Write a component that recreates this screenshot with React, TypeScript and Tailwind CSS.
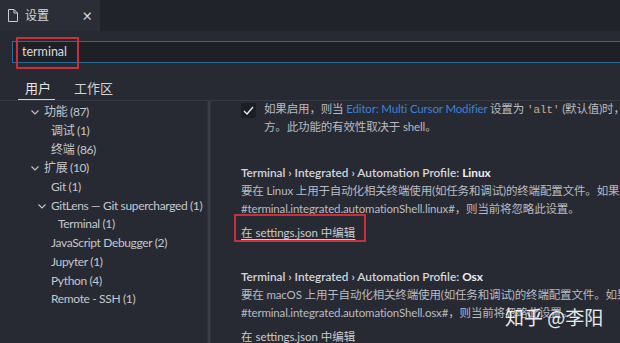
import React from "react";

const treeItems = [
  { label: "功能 (87)", indent: 30, open: true },
  { label: "调试 (1)", indent: 51 },
  { label: "终端 (86)", indent: 51 },
  { label: "扩展 (10)", indent: 30, open: true },
  { label: "Git (1)", indent: 51 },
  { label: "GitLens — Git supercharged (1)", indent: 37, open: true },
  { label: "Terminal (1)", indent: 58 },
  { label: "JavaScript Debugger (2)", indent: 51 },
  { label: "Jupyter (1)", indent: 51 },
  { label: "Python (4)", indent: 51 },
  { label: "Remote - SSH (1)", indent: 51 },
];

function Chevron() {
  return (
    <svg width="10" height="10" viewBox="0 0 10 10" className="mr-[4px] shrink-0">
      <path d="M1.5 3.5 L5 7 L8.5 3.5" stroke="#c5c8ce" strokeWidth="1.1" fill="none" />
    </svg>
  );
}

function Setting({ os, desc, shell }: { os: string; desc: string; shell: string }) {
  return (
    <div className="flex flex-col">
      <div className="text-[11.8px] font-semibold text-[#d4d6da] leading-[19px] whitespace-nowrap">
        Terminal › Integrated › Automation Profile: <span className="font-bold text-[#eceef1]">{os}</span>
      </div>
      <div className="text-[11.5px] tracking-[-0.15px] text-[#b8bbc2] leading-[18px] whitespace-nowrap">
        要在 {desc} 上用于自动化相关终端使用(如任务和调试)的终端配置文件。如果设置了
      </div>
      <div className="text-[11.5px] tracking-[-0.15px] text-[#b8bbc2] leading-[18px] whitespace-nowrap">
        #terminal.integrated.automationShell.{shell}#，则当前将忽略此设置。
      </div>
    </div>
  );
}

export default function App() {
  return (
    <div
      className="w-[620px] h-[343px] overflow-hidden bg-[#272a32] flex flex-col relative"
      style={{ fontFamily: 'Lato, "Noto Sans CJK SC", sans-serif' }}
    >
      {/* tab bar */}
      <div className="h-[31px] bg-[#202329] flex shrink-0">
        <div className="w-[100px] bg-[#2b2e36] flex items-center pl-[8px] pr-[8px] text-[#d7d9dd]">
          <svg width="10" height="13" viewBox="0 0 10 13" className="mr-[7px]">
            <path d="M0.5 0.5 H6 L9.5 4 V12.5 H0.5 Z M6 0.5 V4 H9.5" stroke="#c9ccd1" strokeWidth="1" fill="none" />
          </svg>
          <span className="text-[12px]">设置</span>
          <span className="ml-auto text-[17px] leading-none text-[#d7d9dd]">×</span>
        </div>
      </div>

      {/* search */}
      <div className="pt-[10px] pl-[12px] shrink-0">
        <div className="h-[22px] bg-[#1e2026] border-y border-l border-[#2c6b96] flex items-center pl-[9px] relative">
          <span className="text-[12.5px] text-[#d9dbdf]">terminal</span>
          <div className="absolute left-[3px] top-[-5px] w-[63px] h-[32px] border-2 border-[#c8303c]" />
        </div>
      </div>

      {/* scope tabs */}
      <div className="flex pl-[18px] mt-[13px] h-[24px] items-end gap-[14px] text-[13px] shrink-0">
        <div className="flex flex-col text-[#e4e6ea]">
          <span className="leading-[20px] px-[7px]">用户</span>
          <div className="h-[1px] bg-[#d0d3d8] w-[37px] mt-[1px]" />
        </div>
        <span className="text-[#d0d3d8] leading-[20px] mb-[2px] ml-[2px]">工作区</span>
      </div>
      <div className="h-[1px] bg-[#353943] shrink-0" />

      {/* body */}
      <div className="flex flex-1 min-h-0">
        <div className="w-[207px] shrink-0 pt-[2px] text-[12px] tracking-[-0.35px] text-[#c4c7cd]">
          {treeItems.map((it) => (
            <div
              key={it.label}
              className="h-[18.7px] flex items-center whitespace-nowrap"
              style={{ paddingLeft: it.indent }}
            >
              {it.open && <Chevron />}
              {it.label}
            </div>
          ))}
        </div>
        <div className="w-[4px] bg-[#3a3e47] border-x border-[#30333b] shrink-0" />
        <div className="flex-1 pl-[30px] flex flex-col">
          <div className="flex -mt-[1px]">
            <div className="w-[15px] h-[15px] bg-[#1c1e24] rounded-[2px] flex items-center justify-center mt-[3px] shrink-0">
              <svg width="11" height="9" viewBox="0 0 11 9">
                <path d="M1 5 L4 8 L10 1" stroke="#e6e8eb" strokeWidth="1.4" fill="none" />
              </svg>
            </div>
            <div className="ml-[8px] text-[11.5px] tracking-[-0.15px] text-[#b8bbc2] leading-[17px] whitespace-nowrap">
              <div>
                如果启用，则当 <span className="text-[#3b82d9]">Editor: Multi Cursor Modifier</span> 设置为{" "}
                <span className="text-[#d6a77a] tracking-[-0.4px]" style={{ fontFamily: '"Liberation Mono", monospace' }}>
                  'alt'
                </span>{" "}
                (默认值)时，
              </div>
              <div>方。此功能的有效性取决于 shell。</div>
            </div>
          </div>

          <div className="mt-[28px]">
            <Setting os="Linux" desc="Linux" shell="linux" />
          </div>
          <div className="mt-[1px] relative">
            <span className="text-[11.5px] text-[#c9ccd1] underline underline-offset-2 leading-[18px]">
              在 settings.json 中编辑
            </span>
            <div className="absolute left-[-7px] top-[-5px] w-[132px] h-[28px] border-2 border-[#c8303c]" />
          </div>

          <div className="mt-[24px]">
            <Setting os="Osx" desc="macOS" shell="osx" />
          </div>
          <div className="mt-[1px]">
            <span className="text-[11.5px] text-[#c9ccd1] underline underline-offset-2 leading-[18px]">
              在 settings.json 中编辑
            </span>
          </div>
        </div>
      </div>

      {/* watermark */}
      <div
        className="absolute left-[505px] top-[304px] text-[19px] leading-[26px] text-white/90 whitespace-nowrap"
        style={{ fontFamily: '"Noto Sans CJK SC", sans-serif' }}
      >
        知乎 @李阳
      </div>
    </div>
  );
}
